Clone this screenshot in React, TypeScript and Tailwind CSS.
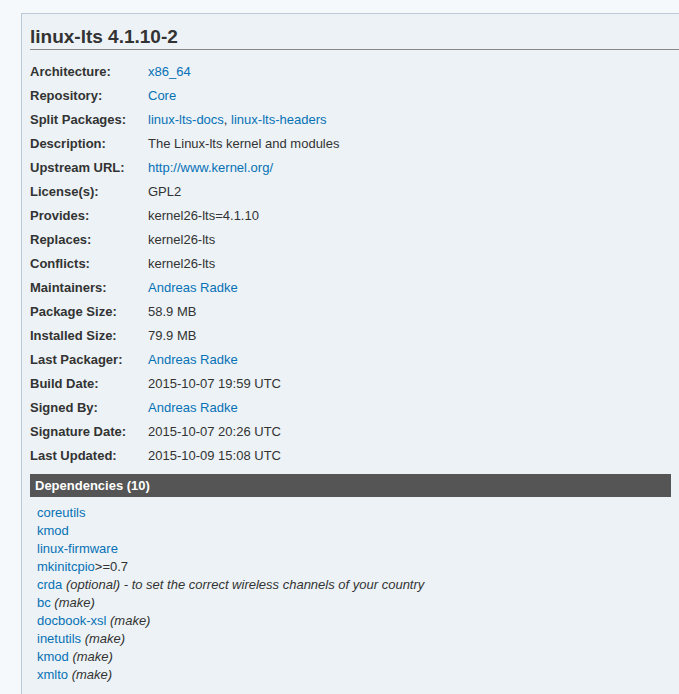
import React from "react";

const L = ({ children }: { children: React.ReactNode }) => (
  <a className="text-[#0771b5] no-underline" href="#">{children}</a>
);

const rows: [string, React.ReactNode][] = [
  ["Architecture:", <L>x86_64</L>],
  ["Repository:", <L>Core</L>],
  ["Split Packages:", <><L>linux-lts-docs</L>, <L>linux-lts-headers</L></>],
  ["Description:", "The Linux-lts kernel and modules"],
  ["Upstream URL:", <L>http://www.kernel.org/</L>],
  ["License(s):", "GPL2"],
  ["Provides:", "kernel26-lts=4.1.10"],
  ["Replaces:", "kernel26-lts"],
  ["Conflicts:", "kernel26-lts"],
  ["Maintainers:", <L>Andreas Radke</L>],
  ["Package Size:", "58.9 MB"],
  ["Installed Size:", "79.9 MB"],
  ["Last Packager:", <L>Andreas Radke</L>],
  ["Build Date:", "2015-10-07 19:59 UTC"],
  ["Signed By:", <L>Andreas Radke</L>],
  ["Signature Date:", "2015-10-07 20:26 UTC"],
  ["Last Updated:", "2015-10-09 15:08 UTC"],
];

const deps: [string, string, string?][] = [
  ["coreutils", ""],
  ["kmod", ""],
  ["linux-firmware", ""],
  ["mkinitcpio", "", ">=0.7"],
  ["crda", "(optional) - to set the correct wireless channels of your country"],
  ["bc", "(make)"],
  ["docbook-xsl", "(make)"],
  ["inetutils", "(make)"],
  ["kmod", "(make)"],
  ["xmlto", "(make)"],
];

export default function App() {
  return (
    <div
      className="w-[679px] h-[694px] overflow-hidden bg-[#f6f9fc] text-[#333] text-[13px]"
      style={{ fontFamily: '"Liberation Sans", Arial, sans-serif' }}
    >
      <div className="ml-[21px] mt-[13px] w-[700px] h-[700px] border-l border-t border-[#bcc9d6] bg-[#ecf2f5] pl-[8px] pt-[11px]">
        <h2 className="text-[19px] leading-[24px] font-bold text-[#333] border-b border-[#888]">
          linux-lts 4.1.10-2
        </h2>
        <div className="mt-[10px]">
          {rows.map(([k, v], i) => (
            <div key={i} className="flex h-[24px] items-center">
              <div className="w-[118px] font-bold">{k}</div>
              <div>{v}</div>
            </div>
          ))}
        </div>
        <div className="mt-[6px] w-[641px] h-[23px] bg-[#555] text-white font-bold flex items-center pl-[5px]">
          Dependencies (10)
        </div>
        <ul className="mt-[7px] pl-[7px]">
          {deps.map(([n, note, ver], i) => (
            <li key={i} className="leading-[18px]">
              <L>{n}</L>
              {ver}
              {note && <> <span className="italic">{note}</span></>}
            </li>
          ))}
        </ul>
      </div>
    </div>
  );
}
